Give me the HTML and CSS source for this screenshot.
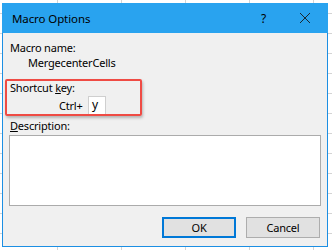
FILE: index.html
```html
<!DOCTYPE html>
<html>
<head>
<meta charset="utf-8">
<link rel="stylesheet" href="styles.css">
</head>
<body>
<div class="sheet">
  <div class="dialog">
    <div class="titlebar">
      <span class="title">Macro Options</span>
      <span class="help">?</span>
      <svg class="close" width="12" height="12" viewBox="0 0 12 12"><path d="M1 1 L11 11 M11 1 L1 11" stroke="#1a1a1a" stroke-width="0.9" fill="none"/></svg>
    </div>
    <div class="content">
      <div class="label">Macro name:</div>
      <div class="macro">MergecenterCells</div>
      <div class="label shortcut">Shortcut <u>k</u>ey:</div>
      <div class="keyrow">
        <span class="ctrl">Ctrl+</span>
        <span class="keybox">y</span>
      </div>
      <div class="label desc"><u>D</u>escription:</div>
      <div class="textarea"></div>
      <div class="buttons">
        <div class="btn default">OK</div>
        <div class="btn">Cancel</div>
      </div>
    </div>
    <div class="highlight"></div>
  </div>
</div>
</body>
</html>
```
FILE: styles.css
```css
html, body {
  margin: 0;
  padding: 0;
}
body {
  width: 332px;
  height: 250px;
  overflow: hidden;
  font-family: "Noto Sans", "Open Sans", sans-serif;
  color: #000;
}
.sheet {
  width: 332px;
  height: 250px;
  padding: 3px 0 0 2px;
  box-sizing: border-box;
  background-color: #fff;
  background-image:
    linear-gradient(to right, #d4d4d4 1px, transparent 1px),
    linear-gradient(to bottom, #d4d4d4 1px, transparent 1px);
  background-size: 64px 20px;
  background-position: 57px 13px;
}
.dialog {
  position: relative;
  width: 326px;
  height: 244px;
  box-sizing: border-box;
  background: #f0f0f0;
  border: 1px solid #1c8fe3;
  border-top: 0;
  display: flex;
  flex-direction: column;
}
.titlebar {
  height: 30px;
  margin: 0 -1px;
  background: #29a3ef;
  display: flex;
  align-items: center;
  padding-left: 10px;
  flex: none;
}
.title {
  font-size: 11.5px;
  letter-spacing: -0.1px;
  flex: 1;
}
.help {
  font-size: 12px;
  width: 38px;
}
.close {
  margin-right: 17px;
}
.content {
  padding: 7px 6px 0 7px;
  font-size: 11px;
  letter-spacing: -0.2px;
  display: flex;
  flex-direction: column;
}
.label, .macro {
  line-height: 15px;
  height: 15px;
}
.macro {
  padding-left: 18px;
}
.shortcut {
  margin-top: 10px;
}
.keyrow {
  display: flex;
  align-items: center;
  margin-top: 1px;
  padding-left: 49px;
  height: 19px;
}
.ctrl {
  width: 29px;
}
.keybox {
  width: 18px;
  height: 19px;
  box-sizing: border-box;
  background: #fff;
  border: 1px solid #cfcfcf;
  line-height: 16px;
  padding-left: 3px;
  font-size: 12px;
}
.desc {
  margin-top: 3px;
}
.textarea {
  margin: 2px 0 0 -1px;
  width: 312px;
  height: 71px;
  box-sizing: border-box;
  background: #fff;
  border: 1px solid #ababab;
}
.buttons {
  display: flex;
  justify-content: flex-end;
  gap: 10px;
  margin-top: 11px;
  padding-right: 1px;
}
.btn {
  width: 74px;
  height: 21px;
  box-sizing: border-box;
  background: #e1e1e1;
  border: 1px solid #adadad;
  display: flex;
  align-items: center;
  justify-content: center;
  font-size: 11px;
}
.btn.default {
  border: 2px solid #0078d7;
}
.highlight {
  position: absolute;
  left: 2px;
  top: 76px;
  width: 137px;
  height: 37px;
  box-sizing: border-box;
  border: 2px solid #ef4b44;
  border-radius: 2px;
  box-shadow: 1px 2px 3px rgba(0, 0, 0, 0.25);
}
```
